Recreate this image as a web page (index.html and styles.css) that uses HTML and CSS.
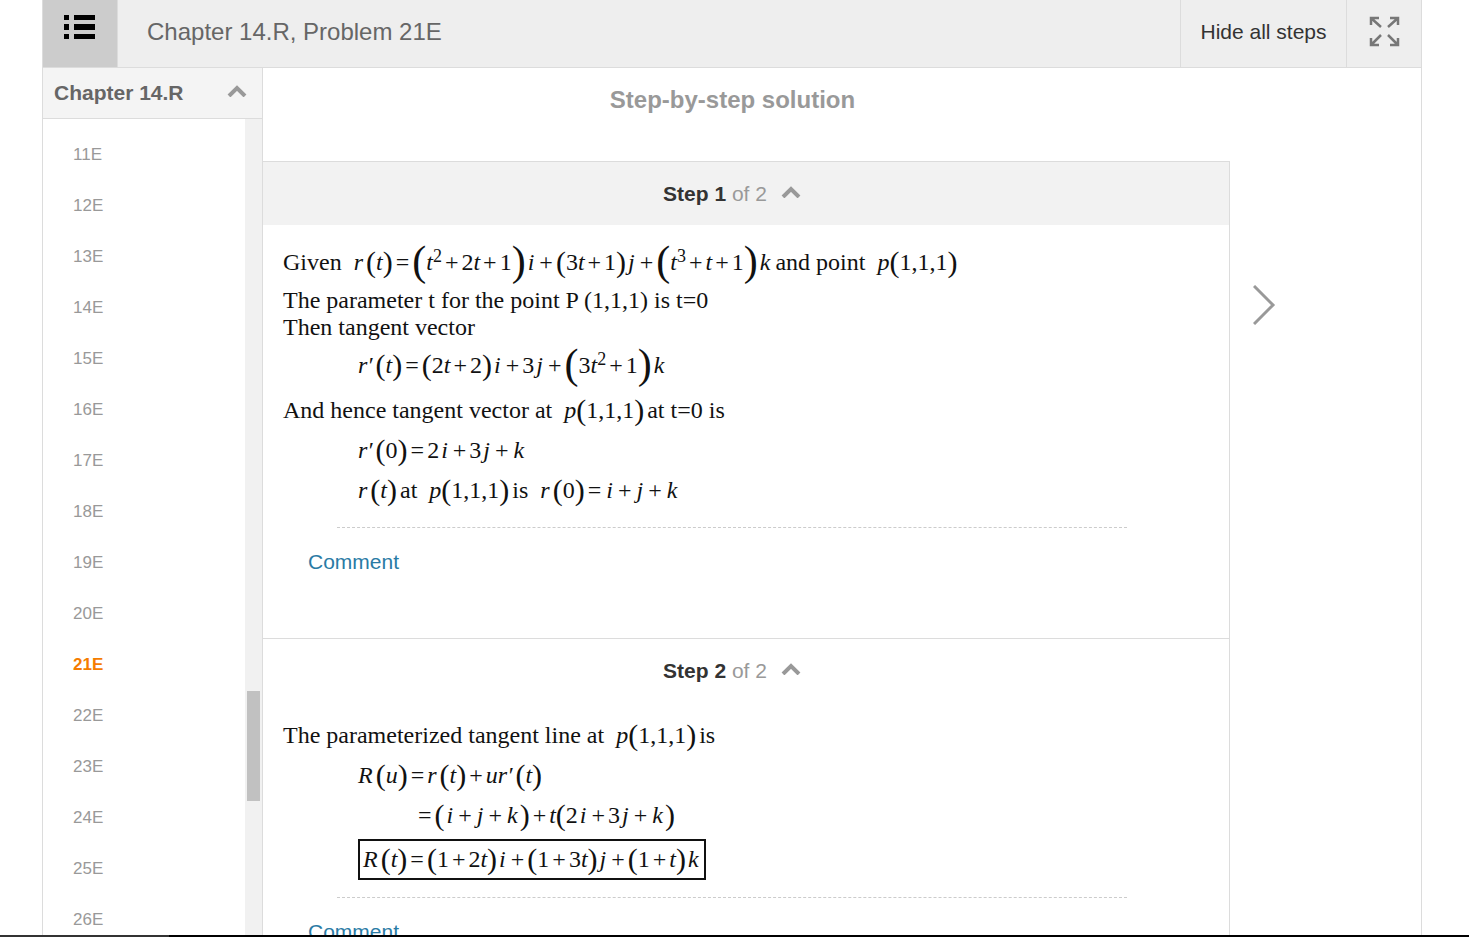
FILE: index.html
```html
<!DOCTYPE html>
<html lang="en">
<head>
    <meta charset="UTF-8">
    <meta name="viewport" content="width=device-width, initial-scale=1.0">
    <title>Chapter 14.R, Problem 21E</title>
    <link rel="stylesheet" href="styles.css">
</head>
<body>
    <div class="viewer">
        <header class="top-bar">
            <button type="button" class="list-btn" aria-label="Table of contents">
                <svg width="32" height="26" viewBox="0 0 32 26">
                    <path d="M0 0h5v5H0zM10 0h21v5H10zM0 9h5v6H0zM10 9h21v6H10zM0 19h5v5H0zM10 19h21v5H10z"/>
                </svg>
            </button>
            <h1>Chapter 14.R, Problem 21E</h1>
            <button type="button" class="hide-btn">Hide all steps</button>
            <button type="button" class="expand-btn" aria-label="Full screen">
                <svg width="32" height="32" viewBox="0 0 32 32" fill="none" stroke="#777" stroke-width="2.5">
                    <path d="M3 10V3h8M3 3l10 9M22 3h8v7M30 3L20 12M3 23v7h8M3 30l10-10M22 30h8v-7M30 30L20 20"/>
                </svg>
            </button>
        </header>
        <div class="main">
            <nav class="sidebar">
                <button type="button" class="chapter">
                    Chapter 14.R
                    <svg class="caret" width="20" height="13" viewBox="0 0 20 13"><path d="M2 12l8-8 8 8"/></svg>
                </button>
                <div class="list-wrap">
                    <ul class="problems">
                        <li><a href="#">11E</a></li>
                        <li><a href="#">12E</a></li>
                        <li><a href="#">13E</a></li>
                        <li><a href="#">14E</a></li>
                        <li><a href="#">15E</a></li>
                        <li><a href="#">16E</a></li>
                        <li><a href="#">17E</a></li>
                        <li><a href="#">18E</a></li>
                        <li><a href="#">19E</a></li>
                        <li><a href="#">20E</a></li>
                        <li><a href="#" class="active">21E</a></li>
                        <li><a href="#">22E</a></li>
                        <li><a href="#">23E</a></li>
                        <li><a href="#">24E</a></li>
                        <li><a href="#">25E</a></li>
                        <li><a href="#">26E</a></li>
                    </ul>
                    <div class="scrollbar"><div class="thumb"></div></div>
                </div>
            </nav>
            <main class="content">
                <div class="solution">
                    <h2>Step-by-step solution</h2>
                    <section class="step">
                        <button type="button" class="step-head shaded">
                            <span><strong>Step 1</strong> of 2</span>
                            <svg class="caret" width="20" height="13" viewBox="0 0 20 13"><path d="M2 12l8-8 8 8"/></svg>
                        </button>
                        <div class="step-body">
                            <p class="line tall"><span>Given</span><span class="math"><i class="fn">r</i><b>(</b><i>t</i><b>)</b><u>=</u><b class="big">(</b><i>t</i><sup>2</sup><u>+</u>2<i>t</i><u>+</u>1<b class="big">)</b><em>i</em><u>+</u><b>(</b>3<i>t</i><u>+</u>1<b>)</b><em>j</em><u>+</u><b class="big">(</b><i>t</i><sup>3</sup><u>+</u><i>t</i><u>+</u>1<b class="big">)</b><em>k</em><span class="word">and point</span></span><span class="math"><i>p</i><b>(</b>1,1,1<b>)</b></span></p>
                            <p class="line text">The parameter t for the point P (1,1,1) is t=0</p>
                            <p class="line text">Then tangent vector</p>
                            <p class="line tall indent"><span class="math"><i>r</i><i class="fn">′</i><b>(</b><i>t</i><b>)</b><u>=</u><b>(</b>2<i>t</i><u>+</u>2<b>)</b><em>i</em><u>+</u>3<em>j</em><u>+</u><b class="big">(</b>3<i>t</i><sup>2</sup><u>+</u>1<b class="big">)</b><em>k</em></span></p>
                            <p class="line"><span>And hence tangent vector at</span><span class="math"><i>p</i><b>(</b>1,1,1<b>)</b><span class="word">at t=0 is</span></span></p>
                            <p class="line indent"><span class="math"><i>r</i><i class="fn">′</i><b>(</b>0<b>)</b><u>=</u>2<em>i</em><u>+</u>3<em>j</em><u>+</u><em>k</em></span></p>
                            <p class="line indent"><span class="math"><i class="fn">r</i><b>(</b><i>t</i><b>)</b><span class="word">at</span></span><span class="math"><i>p</i><b>(</b>1,1,1<b>)</b><span class="word">is</span></span><span class="math"><i class="fn">r</i><b>(</b>0<b>)</b><u>=</u><em>i</em><u>+</u><em>j</em><u>+</u><em>k</em></span></p>
                        </div>
                        <div class="step-foot"><a href="#">Comment</a></div>
                    </section>
                    <section class="step">
                        <button type="button" class="step-head">
                            <span><strong>Step 2</strong> of 2</span>
                            <svg class="caret" width="20" height="13" viewBox="0 0 20 13"><path d="M2 12l8-8 8 8"/></svg>
                        </button>
                        <div class="step-body">
                            <p class="line"><span>The parameterized tangent line at</span><span class="math"><i>p</i><b>(</b>1,1,1<b>)</b><span class="word">is</span></span></p>
                            <p class="line indent"><span class="math"><i class="fn">R</i><b>(</b><i>u</i><b>)</b><u>=</u><i class="fn">r</i><b>(</b><i>t</i><b>)</b><u>+</u><i>ur</i><i class="fn">′</i><b>(</b><i>t</i><b>)</b></span></p>
                            <p class="line indent-more"><span class="math"><u>=</u><b>(</b><em>i</em><u>+</u><em>j</em><u>+</u><em>k</em><b>)</b><u>+</u><i>t</i><b>(</b>2<em>i</em><u>+</u>3<em>j</em><u>+</u><em>k</em><b>)</b></span></p>
                            <p class="line answer indent"><span class="math boxed"><i class="fn">R</i><b>(</b><i>t</i><b>)</b><u>=</u><b>(</b>1<u>+</u>2<i>t</i><b>)</b><em>i</em><u>+</u><b>(</b>1<u>+</u>3<i>t</i><b>)</b><em>j</em><u>+</u><b>(</b>1<u>+</u><i>t</i><b>)</b><em>k</em></span></p>
                        </div>
                        <div class="step-foot"><a href="#">Comment</a></div>
                    </section>
                </div>
                <div class="next">
                    <button type="button" class="next-btn" aria-label="Next problem">
                        <svg width="24" height="40" viewBox="0 0 24 40" fill="none" stroke="#999" stroke-width="3"><path d="M1 1l19 19L1 39"/></svg>
                    </button>
                </div>
            </main>
        </div>
    </div>
    <div class="bottom-bar"><div class="bottom-left"></div></div>
</body>
</html>
```
FILE: styles.css
```css
* {
    box-sizing: border-box;
}
body {
    margin: 0;
    height: 100vh;
    overflow: hidden;
    background: #fff;
    font-family: "Liberation Sans", Arial, sans-serif;
    color: #333;
}
button {
    margin: 0;
    padding: 0;
    border: none;
    background: none;
    font-family: inherit;
    font-size: 21px;
    color: #333;
    cursor: pointer;
}
a {
    text-decoration: none;
}
.viewer {
    display: flex;
    flex-direction: column;
    height: 100vh;
    margin: 0 47px 0 42px;
    border: 1px solid #dcdcdc;
    border-width: 0 1px;
}
.top-bar {
    display: flex;
    flex: none;
    height: 68px;
    background: #eee;
    border-bottom: 1px solid #dcdcdc;
}
.list-btn {
    width: 75px;
    padding-bottom: 7px;
    background: #ccc;
    border-right: 1px solid #dcdcdc;
}
.top-bar h1 {
    flex: 1;
    margin: 0;
    padding-left: 29px;
    font-size: 24px;
    font-weight: normal;
    line-height: 64px;
    color: #666;
}
.hide-btn {
    width: 166px;
    padding-bottom: 4px;
    border-left: 1px solid #dcdcdc;
}
.expand-btn {
    display: flex;
    align-items: center;
    justify-content: center;
    width: 75px;
    padding-bottom: 5px;
    border-left: 1px solid #dcdcdc;
}
.main {
    display: flex;
    flex: 1;
    min-height: 0;
}
.sidebar {
    display: flex;
    flex-direction: column;
    width: 220px;
    border-right: 1px solid #dcdcdc;
}
.chapter {
    display: flex;
    flex: none;
    align-items: center;
    justify-content: space-between;
    height: 51px;
    padding: 0 15px 0 11px;
    background: #f4f4f4;
    border-bottom: 1px solid #dcdcdc;
    font-weight: bold;
    color: #666;
}
.caret {
    margin-bottom: 5px;
    fill: none;
    stroke: #999;
    stroke-width: 4;
}
.list-wrap {
    display: flex;
    flex: 1;
    min-height: 0;
}
.problems {
    flex: 1;
    margin: 0;
    padding: 10px 0 0 30px;
    overflow: hidden;
    list-style: none;
    font-size: 17px;
    line-height: 51px;
}
.problems a {
    color: #999;
}
.problems .active {
    font-weight: bold;
    color: #f57c00;
}
.scrollbar {
    width: 17px;
    padding: 572px 2px 0;
    background: #f1f1f1;
}
.thumb {
    height: 110px;
    background: #c1c1c1;
}
.content {
    display: flex;
    flex: 1;
    min-width: 0;
    overflow: hidden;
}
.solution {
    flex: 1;
}
.solution h2 {
    margin: 0;
    padding: 18px 28px 47px 0;
    font-size: 24px;
    line-height: 28px;
    text-align: center;
    color: #999;
}
.step {
    border: 1px solid #dcdcdc;
    border-width: 1px 1px 0 0;
}
.step-head {
    display: flex;
    align-items: center;
    justify-content: center;
    gap: 14px;
    width: 100%;
    height: 63px;
    padding-right: 28px;
    color: #999;
}
.step-head strong {
    color: #333;
}
.shaded {
    background: #f2f2f2;
}
.step-body {
    padding: 13px 20px 17px;
    font-family: "Liberation Serif", "Times New Roman", serif;
    font-size: 24px;
    color: #111;
}
.line {
    display: flex;
    align-items: center;
    gap: 12px;
    height: 40px;
    margin: 0;
    line-height: 27px;
    white-space: nowrap;
}
.text {
    height: 27px;
}
.tall {
    height: 49px;
}
.answer {
    height: 45px;
}
.indent {
    padding-left: 75px;
}
.indent-more {
    padding-left: 132px;
}
/* brackets, operators and unit vectors inside a formula */
.math b {
    font-size: 30px;
    font-weight: normal;
    line-height: 0;
    vertical-align: -2px;
}
.math .big {
    font-size: 42px;
    vertical-align: -5px;
}
.math u {
    margin: 0 3px;
    text-decoration: none;
}
.math em {
    margin: 0 2px;
}
.math sup {
    font-size: 18px;
    line-height: 0;
    vertical-align: 8px;
}
.fn {
    margin-right: 3px;
}
.word {
    margin-left: 3px;
}
.boxed {
    margin-top: 3px;
    padding: 5px 3px;
    border: 2px solid #111;
}
.step-foot {
    margin: 0 102px 0 74px;
    padding: 20px 0 60px;
    border-top: 1px dashed #ccc;
    line-height: 28px;
}
.step-foot a {
    margin-left: -29px;
    font-size: 21px;
    color: #2a7ba5;
}
.next {
    width: 191px;
    padding: 217px 0 0 23px;
}
.next-btn {
    display: block;
}
.bottom-bar {
    position: fixed;
    bottom: 0;
    width: 100%;
    height: 2px;
    background: #000;
}
.bottom-left {
    width: 169px;
    height: 2px;
    background: #333;
}
```
